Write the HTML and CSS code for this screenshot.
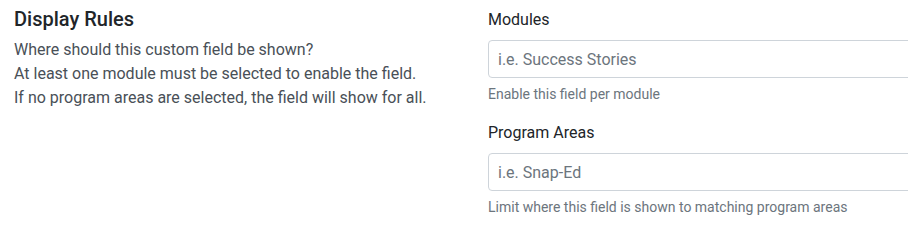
FILE: index.html
```html
<!DOCTYPE html>
<html lang="en">

<head>
    <meta charset="UTF-8">
    <meta name="viewport" content="width=device-width, initial-scale=1.0">
    <title>Display Rules</title>
    <link rel="stylesheet" href="styles.css">
</head>

<body>

    <div class="settings_row">
        <div class="settings_col">
            <h3 class="section_title">Display Rules</h3>
            <p class="section_text">
                Where should this custom field be shown?<br>
                At least one module must be selected to enable the field.<br>
                If no program areas are selected, the field will show for all.
            </p>
        </div>
        <div class="settings_col">
            <div class="form_group">
                <label class="form_label" for="modules">Modules</label>
                <input class="form_input" id="modules" type="text" placeholder="i.e. Success Stories">
                <small class="form_help">Enable this field per module</small>
            </div>
            <div class="form_group">
                <label class="form_label" for="program_areas">Program Areas</label>
                <input class="form_input" id="program_areas" type="text" placeholder="i.e. Snap-Ed">
                <small class="form_help">Limit where this field is shown to matching program areas</small>
            </div>
        </div>
    </div>

</body>

</html>
```

FILE: styles.css
```css
body {
    margin: 0;
    overflow: hidden;
    background: #fff;
    font-family: Roboto, "Liberation Sans", sans-serif;
    color: #212529;
}

.settings_row {
    display: flex;
    width: 948px;
    margin-left: -1px;
}

.settings_col {
    width: 474px;
    flex-shrink: 0;
    padding: 0 15px;
    box-sizing: border-box;
}

.section_title {
    margin: 7px 0 0;
    font-size: 20px;
    font-weight: 500;
    line-height: 24px;
}

.section_text {
    margin: 7px 0 0;
    font-size: 16px;
    line-height: 24px;
    color: #495057;
}

.form_group {
    margin-top: 8px;
    margin-bottom: 16px;
}

.form_label {
    display: block;
    font-size: 16px;
    line-height: 24px;
    margin-bottom: 8px;
}

.form_input {
    display: block;
    width: 100%;
    height: 38px;
    box-sizing: border-box;
    padding: 0 9px;
    border: 1px solid #ced4da;
    border-radius: 4px;
    font-family: inherit;
    font-size: 16px;
    color: #495057;
}

.form_input::placeholder {
    color: #6c757d;
}

.form_help {
    display: block;
    margin-top: 6px;
    font-size: 14px;
    line-height: 21px;
    color: #6c757d;
}
```
